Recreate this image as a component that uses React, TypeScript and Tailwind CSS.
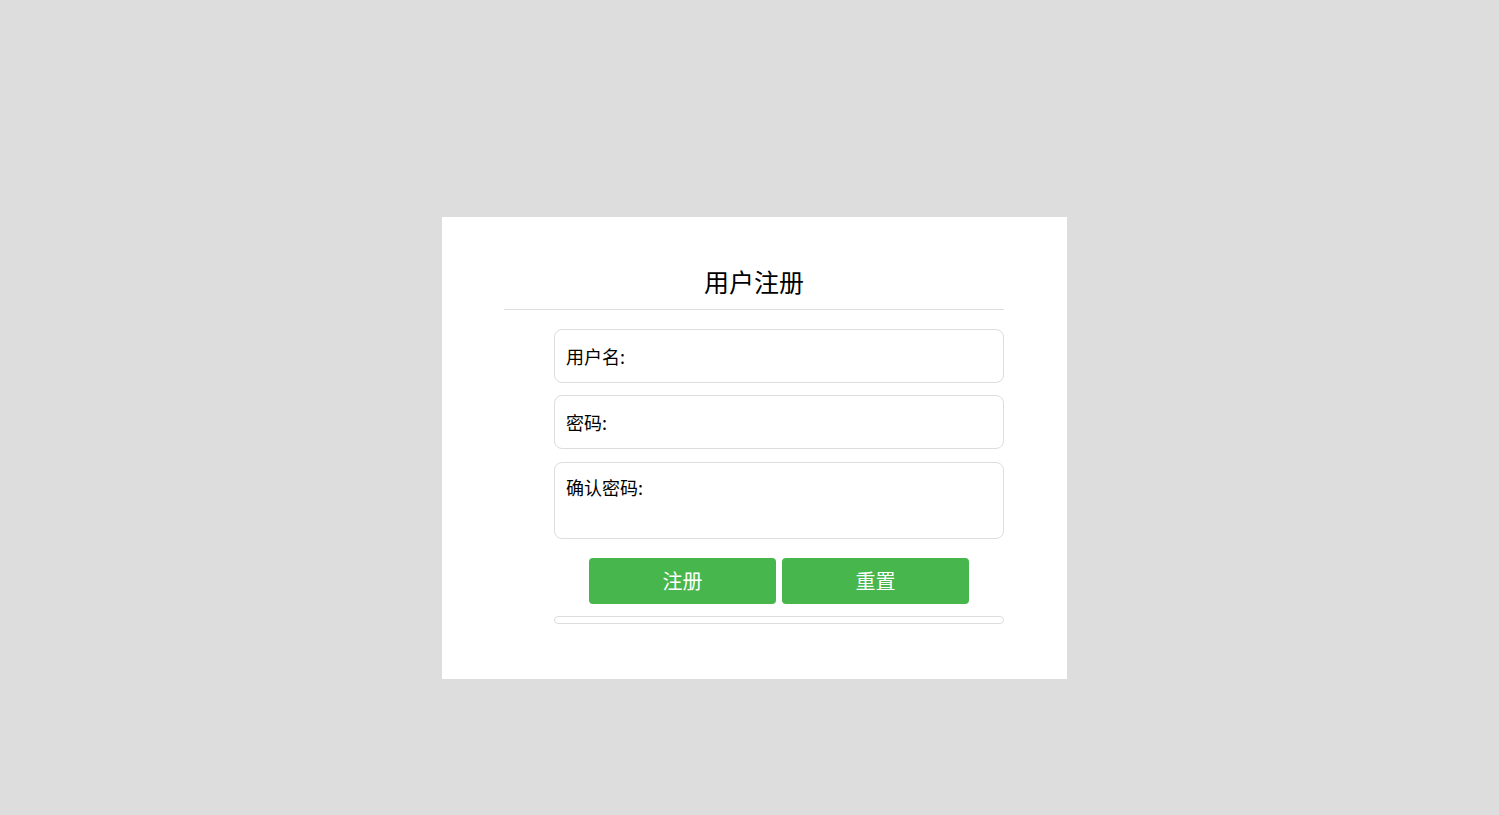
export default function App() {
  const font = { fontFamily: '"Noto Sans CJK SC", "Noto Sans", sans-serif' };
  return (
    <div className="w-full h-[815px] bg-[#dddddd] flex justify-center pt-[217px]" style={font}>
      <div className="w-[625px] h-[462px] ml-[10px] bg-white pt-[46px] flex flex-col">
        <div className="w-[500px] ml-[62px] border-b border-[#dddddd] text-center text-[25px] leading-[36px] text-black pb-[10px]">
          用户注册
        </div>
        <div className="w-[450px] ml-[112px] mt-[19px] flex flex-col">
          <div className="h-[54px] border border-[#dddddd] rounded-[8px] px-[11px] flex items-center text-[18px] text-black">
            用户名:
          </div>
          <div className="h-[54px] mt-[12px] border border-[#dddddd] rounded-[8px] px-[11px] flex items-center text-[18px] text-black">
            密码:
          </div>
          <div className="h-[77px] mt-[13px] border border-[#dddddd] rounded-[8px] px-[11px] pt-[11px] text-[18px] leading-[26px] text-black">
            确认密码:
          </div>
          <div className="mt-[19px] flex justify-center gap-[6px]">
            <button className="w-[187px] h-[46px] bg-[#47b64c] rounded-[4px] text-white text-[20px]">注册</button>
            <button className="w-[187px] h-[46px] bg-[#47b64c] rounded-[4px] text-white text-[20px]">重置</button>
          </div>
          <div className="mt-[12px] h-[8px] border border-[#dddddd] rounded-[4px]"></div>
        </div>
      </div>
    </div>
  );
}
